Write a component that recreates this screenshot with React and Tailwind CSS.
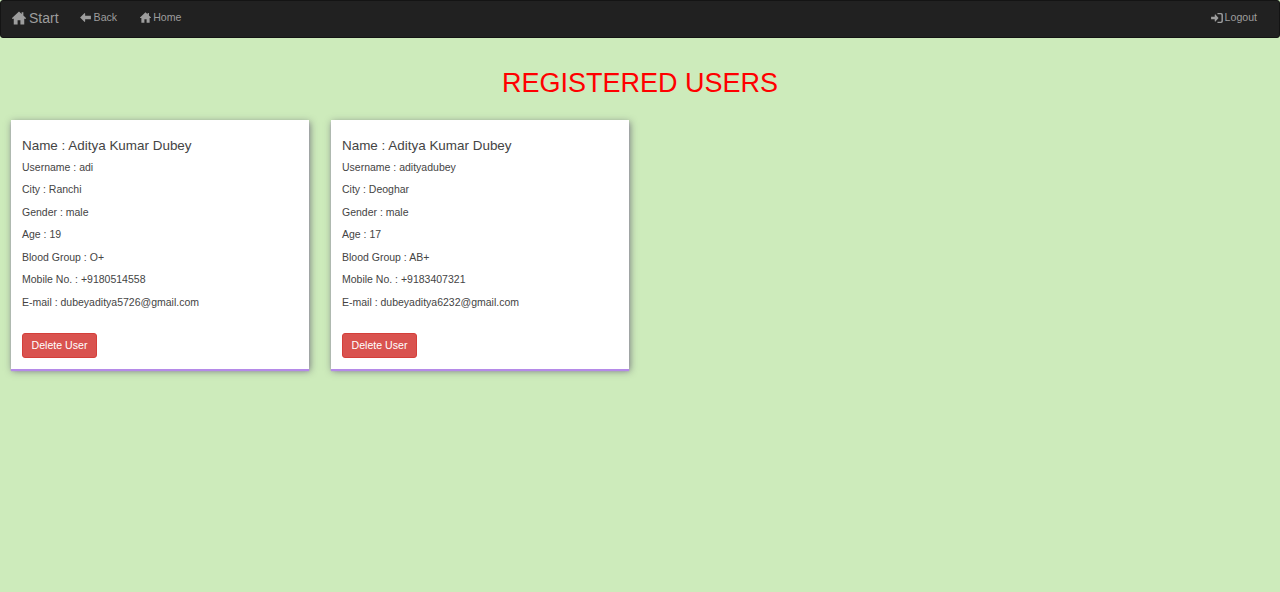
import React from "react";

const users = [
  {
    name: "Aditya Kumar Dubey",
    username: "adi",
    city: "Ranchi",
    gender: "male",
    age: "19",
    blood: "O+",
    mobile: "+9180514558",
    email: "dubeyaditya5726@gmail.com",
  },
  {
    name: "Aditya Kumar Dubey",
    username: "adityadubey",
    city: "Deoghar",
    gender: "male",
    age: "17",
    blood: "AB+",
    mobile: "+9183407321",
    email: "dubeyaditya6232@gmail.com",
  },
];

const HomeIcon = ({ className }) => (
  <svg viewBox="0 0 16 15" className={className} fill="currentColor">
    <path d="M8 0 L11 2.8 V1 H13 V4.7 L16 7.6 V8.4 H14 V15 H9.6 V10.2 H6.4 V15 H2 V8.4 H0 V7.6 Z" />
  </svg>
);

const BackIcon = ({ className }) => (
  <svg viewBox="0 0 12 10" className={className} fill="currentColor">
    <path d="M5 0 L5.6 0.6 V3 H12 V7 H5.6 V9.4 L5 10 L0 5 Z" />
  </svg>
);

const LoginIcon = ({ className }) => (
  <svg viewBox="0 0 13 11" className={className} fill="currentColor">
    <path d="M4 1.8 L4.6 1.4 L8.2 5.5 L4.6 9.6 L4 9.2 V7 H0 V4 H4 Z" />
    <path d="M7 0 H11 Q13 0 13 2 V9 Q13 11 11 11 H7 V9.6 H10.4 Q11.4 9.6 11.4 8.6 V2.4 Q11.4 1.4 10.4 1.4 H7 Z" />
  </svg>
);

const UserCard = ({ user }) => {
  return (
    <div className="w-[298px] h-[249px] bg-white px-[11px] pt-[18px] shadow-[0_2px_1px_#b58ae8,1px_2px_7px_rgba(70,60,90,0.65)]">
      <h4 className="text-[13.45px] leading-[16px] mb-[4.75px] text-[#444]">Name : {user.name}</h4>
      <div className="text-[10.5px] text-[#444]">
        <p className="leading-[17.5px] mb-[5px]">Username : {user.username}</p>
        <p className="leading-[17.5px] mb-[5px]">City : {user.city}</p>
        <p className="leading-[17.5px] mb-[5px]">Gender : {user.gender}</p>
        <p className="leading-[17.5px] mb-[5px]">Age : {user.age}</p>
        <p className="leading-[17.5px] mb-[5px]">Blood Group : {user.blood}</p>
        <p className="leading-[17.5px] mb-[5px]">Mobile No. : {user.mobile}</p>
        <p className="leading-[17.5px] mb-[5px]">E-mail : {user.email}</p>
      </div>
      <button className="mt-[17px] w-[75px] h-[25px] rounded-[3px] bg-[#d9534f] border border-[#d43f3a] text-white text-[10.6px]">
        Delete User
      </button>
    </div>
  );
};

export default function App() {
  return (
    <div className="min-h-[592px] bg-[#cdebbb] font-['Liberation_Sans',Arial,sans-serif]">
      <nav className="h-[38px] bg-[#212121] border border-[#141414] rounded-[3px] flex items-center text-[#9d9d9d] text-[10.6px]">
        <a className="flex items-center ml-[11px] gap-[3px] -mt-[1px] text-[14px]">
          <HomeIcon className="w-[14px] h-[14px] -mt-[1px]" />
          Start
        </a>
        <a className="flex items-center ml-[21px] gap-[3px] -mt-[2px]">
          <BackIcon className="w-[11px] h-[9px]" />
          Back
        </a>
        <a className="flex items-center ml-[23px] gap-[2px] -mt-[2px]">
          <HomeIcon className="w-[11px] h-[11px]" />
          Home
        </a>
        <a className="flex items-center ml-auto mr-[22px] gap-[2px] -mt-[2px]">
          <LoginIcon className="w-[12px] h-[10px]" />
          Logout
        </a>
      </nav>
      <h2 className="text-center text-[red] text-[27px] leading-[30px] pt-[30px] pb-[22px]">REGISTERED USERS</h2>
      <div className="flex gap-[22px] pl-[11px]">
        {users.map((user) => (
          <UserCard key={user.username} user={user} />
        ))}
      </div>
    </div>
  );
}
